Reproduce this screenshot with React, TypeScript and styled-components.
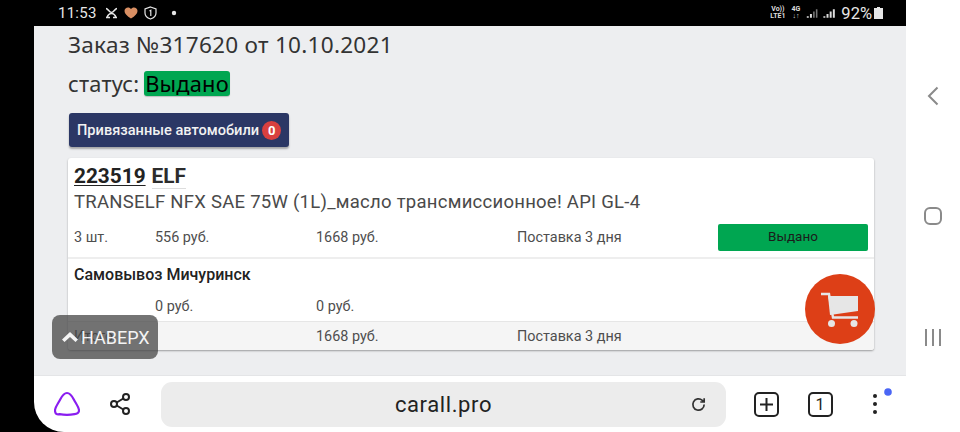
import * as React from "react"
import styled, { createGlobalStyle } from "styled-components"

const Global = createGlobalStyle`
    html, body { margin: 0; padding: 0; background: #fff; }
    body { font-family: Roboto, "Liberation Sans", sans-serif; }
`

const Page = styled.div`
    width: 960px; height: 432px; overflow: hidden;
    display: grid; grid-template-columns: 34px 872px 54px;
    background: #fff;
`
const LeftEdge = styled.div` background: #000; `
const Screen = styled.div`
    position: relative;
    display: flex; flex-direction: column;
    height: 432px;
    background: #000;
`
const StatusBar = styled.div`
    height: 26px; flex-shrink: 0;
    display: flex; align-items: center; justify-content: space-between;
    padding: 0 23px 0 24px;
    color: #e8e8e8; background: #000;
`
const StatusGroup = styled.div` display: flex; align-items: center; gap: 6px; `
const Clock = styled.span` font-size: 15px; letter-spacing: .25px; margin-right: 2px; color: #e6e6e6; `
const Battery = styled.span` font-size: 16.5px; color: #e6e6e6; margin-left: -1px; `
const NetLabel = styled.span`
    display: inline-block; font-size: 7px; line-height: 7.5px; font-weight: 700; text-align: center; color: #ddd;
`
const Content = styled.div`
    flex: 1;
    background: #edeef0;
    padding: 0 32px 0 34px;
    border-bottom: 1px solid #e4e5e7;
`
const OrderTitle = styled.div`
    font-family: "Noto Sans", sans-serif;
    font-size: 22.6px; line-height: 24px; color: #333;
    margin-top: 7px; letter-spacing: .25px;
`
const StatusLine = styled.div`
    font-family: "Noto Sans", sans-serif;
    font-size: 21.8px; line-height: 26px; color: #333;
    margin-top: 14px; letter-spacing: .2px;
`
const StatusTag = styled.span`
    display: inline-block; background: #00a651; color: #000;
    border-radius: 3px; line-height: 25px; padding: 0 1px; margin-left: -1px;
    box-shadow: 0 1px 1px rgba(0,0,0,.2);
`
const CarsButton = styled.button`
    display: flex; align-items: center; gap: 3px;
    height: 34px; margin: 16px 0 0 1px; padding: 0 8px;
    border: 0; border-radius: 3px;
    background: #2b3765; color: #f2f2f2;
    font-family: Roboto, sans-serif; font-size: 14.6px; font-weight: 500;
    box-shadow: 0 2px 2px rgba(0,0,0,.3);
`
const Badge = styled.span`
    display: inline-flex; align-items: center; justify-content: center;
    width: 19px; height: 19px; border-radius: 50%;
    background: #d9403f; color: #fff; font-size: 13px; font-weight: 700;
`
const Card = styled.div`
    margin-top: 11px; background: #fff; border-radius: 3px;
    box-shadow: 0 1px 2px rgba(0,0,0,.35);
    height: 192px; overflow: hidden;
`
const CardHead = styled.div` padding: 6px 6px 0; `
const PartNumber = styled.div`
    display: flex; gap: 6px;
    font-size: 20.8px; line-height: 25px; font-weight: 700; color: #222;
    & > span { text-decoration: underline; text-underline-offset: 2px; text-decoration-thickness: 1px; }
    & > b { font-weight: 700; color: #2c2c2c; border-bottom: 1px solid #ddd; height: 24px; }
`
const PartName = styled.div`
    font-size: 18.5px; line-height: 24px; color: #4a4a4a; letter-spacing: .26px; margin-top: 1px;
`
const Row = styled.div<{ $h: number; $shade?: boolean }>`
    display: grid;
    grid-template-columns: 81px 161px 201px 201px 150px;
    align-items: center;
    height: ${(p) => p.$h}px;
    padding-left: 6px;
    font-size: 14.4px; color: #4e4e4e;
    background: ${(p) => (p.$shade ? "#f5f5f5" : "transparent")};
    border-top: ${(p) => (p.$shade ? "1px solid #e6e6e6" : "0")};
    box-sizing: border-box;
`
const ItemRow = styled(Row)` margin-top: 10px; border-bottom: 2px solid #eee; padding-bottom: 6px; `
const FeeRow = styled(Row)` padding-top: 8px; `
const Issued = styled.div`
    height: 27px; line-height: 25px; text-align: center;
    background: #00a651; color: #1b1b1b; font-size: 13.5px; border-radius: 2px;
`
const Pickup = styled.div`
    padding: 7px 6px 0; font-size: 16px; line-height: 18px; font-weight: 500; color: #222;
`
const TopButton = styled.div`
    position: absolute; left: 18px; top: 315px;
    width: 106px; height: 44px; border-radius: 8px;
    background: rgba(70,70,70,.75); color: #f4f4f4;
    display: flex; align-items: center; gap: 2px; padding-left: 9px; box-sizing: border-box;
    font-size: 18px;
`
const CartButton = styled.div`
    position: absolute; left: 771px; top: 274px;
    width: 70px; height: 70px; border-radius: 50%;
    background: #dd3f17;
    display: flex; align-items: center; justify-content: center;
`
const BrowserBar = styled.div`
    height: 56px; flex-shrink: 0; box-sizing: border-box;
    background: #fff; border-bottom-left-radius: 30px;
    display: flex; align-items: center;
    padding: 0 22px 0 20px;
`
const IconSlot = styled.div<{ $w: number }>`
    width: ${(p) => p.$w}px; flex-shrink: 0;
    display: flex; align-items: center; justify-content: center;
`
const AddressBar = styled.div`
    width: 565px; height: 45px; margin-left: 1px; margin-right: 22px; flex-shrink: 0;
    background: #ececec; border-radius: 11px;
    display: flex; align-items: center; justify-content: center;
    position: relative; font-size: 22px; color: #222; letter-spacing: .6px;
`
const ReloadIcon = styled.svg` position: absolute; right: 19px; top: 14px; `
const TabBox = styled.div`
    width: 25px; height: 25px; box-sizing: border-box; border: 2px solid #222; border-radius: 5px;
    display: flex; align-items: center; justify-content: center;
    font-size: 16px; color: #222;
`
const NavRail = styled.div`
    background: #fff; height: 432px;
    display: flex; flex-direction: column; align-items: center;
    padding: 86px 0 0 0; box-sizing: border-box;
`
const NavSlot = styled.div`
    height: 120px; flex-shrink: 0; width: 54px; display: flex; align-items: flex-start; justify-content: center;
    padding-right: 1px;
`

const AliceIcon = () => (
    <svg width="26" height="26" viewBox="0 0 26 26" fill="none">
        <path d="M13 2c3 0 4.700 2.500 6.800 6.500 2.300 4.300 5.200 7.800 5.200 11 0 2.300-1.800 3.200-4.500 3.700-4.500.8-10.500.8-15 0C2.800 23.700 1 22.800 1 19.500c0-3.200 2.900-6.700 5.200-11C8.300 4.500 10 2 13 2z"
            stroke="#8a1df0" strokeWidth="2.200" />
    </svg>
)
const ShareIcon = () => (
    <svg width="22" height="24" viewBox="0 0 22 24" fill="none" stroke="#222" strokeWidth="2">
        <circle cx="17" cy="5" r="3" />
        <circle cx="5" cy="12" r="3" />
        <circle cx="17" cy="19" r="3" />
        <path d="M7.700 10.500l6.600-4M7.700 13.500l6.600 4" />
    </svg>
)
const CartIcon = () => (
    <svg width="38" height="35" viewBox="0 0 38 35">
        <path d="M7 4H37V19L9 23z" fill="#e6e6e6" />
        <path d="M0 2H8L12 25.500H37" fill="none" stroke="#e6e6e6" strokeWidth="2.400" />
        <circle cx="10.500" cy="31.500" r="3.500" fill="#e6e6e6" />
        <circle cx="33" cy="31.500" r="3.500" fill="#e6e6e6" />
    </svg>
)

export default function App() {
    return <Page>
        <Global />
        <LeftEdge />
        <Screen>
            <StatusBar>
                <StatusGroup>
                    <Clock>11:53</Clock>
                    <svg width="13" height="12" viewBox="0 0 13 12" fill="none" stroke="#e6e6e6" strokeWidth="1.600">
                        <path d="M1 1.500c2 0 3 4 5.500 4s3.500-4 5.500-4M2 10.500c1-3 2.500-4 4.500-4s3.500 1 4.500 4M1 10.500h4M8 10.500h4" />
                    </svg>
                    <svg width="14" height="12" viewBox="0 0 14 12"><path d="M7 11.500C3 9 .500 6.500.500 4 .500 1.800 2.200.500 4 .500c1.300 0 2.400.6 3 1.600.6-1 1.700-1.600 3-1.600 1.800 0 3.500 1.300 3.500 3.500 0 2.500-2.500 5-6.500 7.500z" fill="#d98f63" /></svg>
                    <svg width="13" height="14" viewBox="0 0 13 14" fill="none" stroke="#e6e6e6" strokeWidth="1.200">
                        <path d="M6.500 1L12 3v4c0 3-2.500 5-5.500 6C3.500 12 1 10 1 7V3z" /><path d="M5.500 5l1.300-.8V10" />
                    </svg>
                    <svg width="14" height="6" viewBox="0 0 14 6"><circle cx="11" cy="3" r="2.200" fill="#e6e6e6" /></svg>
                </StatusGroup>
                <StatusGroup>
                    <NetLabel>Vo))<br />LTE1</NetLabel>
                    <NetLabel>4G<br />↓↑</NetLabel>
                    <svg width="30" height="13" viewBox="0 0 38 13">
                        <path d="M1 10h2.500v2H1zM5 7h2.500v5H5z" fill="#ddd" /><path d="M9 4h2v8H9zM12.500 1h2v11h-2z" fill="#777" />
                        <path d="M22 10h2.500v2H22zM26 7h2.500v5H26zM30 4h2.500v8H30zM34 1h2.500v11H34z" fill="#ddd" />
                    </svg>
                    <Battery>92%</Battery>
                    <svg width="9" height="12" viewBox="0 0 9 12" style={{ marginLeft: -4 }}><path d="M3 0h3v1h3v11H0V1h3z" fill="#e6e6e6" /></svg>
                </StatusGroup>
            </StatusBar>
            <Content>
                <OrderTitle>Заказ №317620 от 10.10.2021</OrderTitle>
                <StatusLine>статус: <StatusTag>Выдано</StatusTag></StatusLine>
                <CarsButton>Привязанные автомобили <Badge>0</Badge></CarsButton>
                <Card>
                    <CardHead>
                        <PartNumber><span>223519</span><b>ELF</b></PartNumber>
                        <PartName>TRANSELF NFX SAE 75W (1L)_масло трансмиссионное! API GL-4</PartName>
                    </CardHead>
                    <ItemRow $h={35}>
                        <span>3 шт.</span><span>556 руб.</span><span>1668 руб.</span><span>Поставка 3 дня</span>
                        <Issued>Выдано</Issued>
                    </ItemRow>
                    <Pickup>Самовывоз Мичуринск</Pickup>
                    <FeeRow $h={37}>
                        <span></span><span>0 руб.</span><span>0 руб.</span>
                    </FeeRow>
                    <Row $h={29} $shade>
                        <span>Итого</span><span></span><span>1668 руб.</span><span>Поставка 3 дня</span>
                    </Row>
                </Card>
            </Content>
            <BrowserBar>
                <IconSlot $w={26}><AliceIcon /></IconSlot>
                <IconSlot $w={80}><ShareIcon /></IconSlot>
                <AddressBar>
                    carall.pro
                    <ReloadIcon width="17" height="17" viewBox="0 0 24 24" fill="none" stroke="#333" strokeWidth="2.400">
                        <path d="M20 12a8 8 0 1 1-2.600-5.900L20 8.500M20 3v5.500h-5.500" />
                    </ReloadIcon>
                </AddressBar>
                <IconSlot $w={36}><TabBox><svg width="13" height="13" viewBox="0 0 13 13" stroke="#222" strokeWidth="2"><path d="M6.500 0v13M0 6.500h13" /></svg></TabBox></IconSlot>
                <IconSlot $w={72}><TabBox>1</TabBox></IconSlot>
                <IconSlot $w={44}>
                    <svg width="28" height="36" viewBox="0 0 28 36">
                        <circle cx="24" cy="6" r="3.800" fill="#4a66f5" />
                        <circle cx="11" cy="10" r="2" fill="#222" /><circle cx="11" cy="18" r="2" fill="#222" /><circle cx="11" cy="26" r="2" fill="#222" />
                    </svg>
                </IconSlot>
            </BrowserBar>
            <TopButton>
                <svg width="18" height="12" viewBox="0 0 18 12"><path d="M9 1L1 8.500 3.500 11 9 6l5.500 5L17 8.500z" fill="#f4f4f4" /></svg>
                НАВЕРХ
            </TopButton>
            <CartButton><CartIcon /></CartButton>
        </Screen>
        <NavRail>
            <NavSlot>
                <svg width="12" height="20" viewBox="0 0 12 20" fill="none" stroke="#8a8a8a" strokeWidth="2"><path d="M10.500 1.500L2 10l8.500 8.500" /></svg>
            </NavSlot>
            <NavSlot>
                <svg width="20" height="20" viewBox="0 0 20 20" fill="none" stroke="#8a8a8a" strokeWidth="2"><rect x="2" y="2" width="16" height="16" rx="5" /></svg>
            </NavSlot>
            <NavSlot>
                <svg width="18" height="22" viewBox="0 0 18 22" stroke="#8a8a8a" strokeWidth="2"><path d="M2 3v17M9 3v17M16 3v17" /></svg>
            </NavSlot>
        </NavRail>
    </Page>
}
